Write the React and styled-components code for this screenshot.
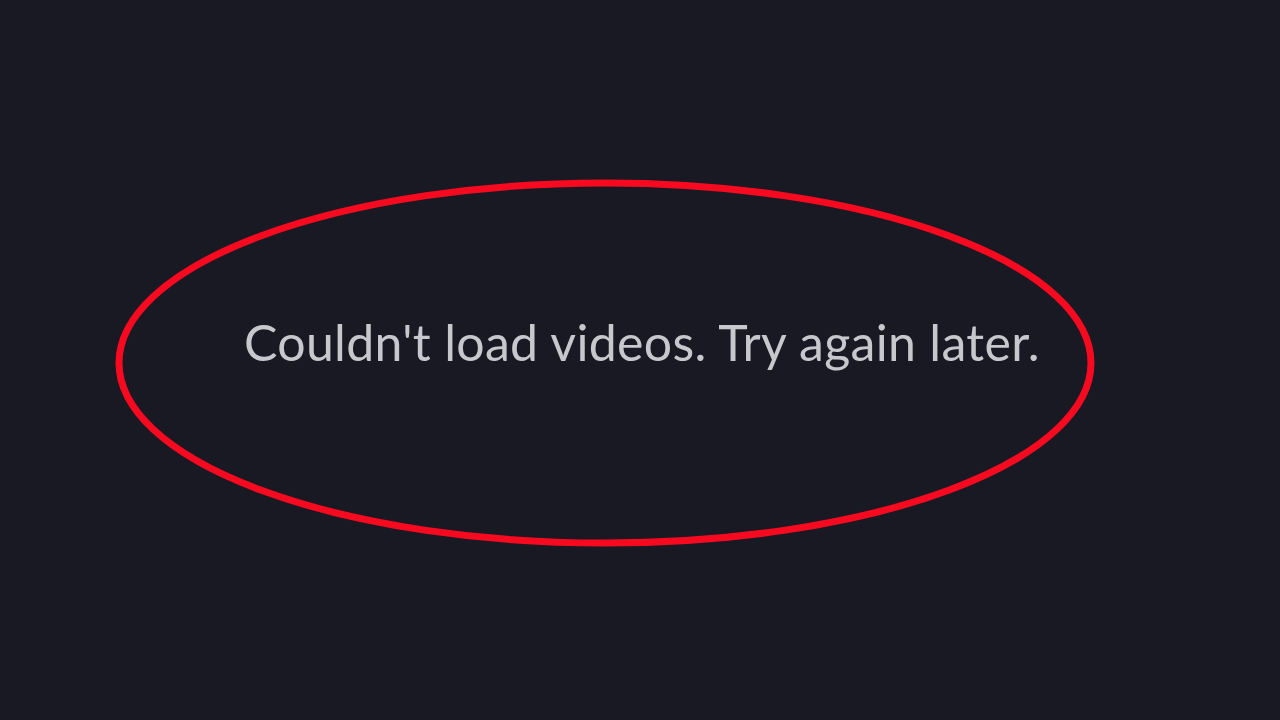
import styled, { createGlobalStyle } from 'styled-components';

const GlobalStyle = createGlobalStyle`
  html, body {
    margin: 0;
    padding: 0;
    background: #181923;
  }
`;

const SScreen = styled.div`
  position: relative;
  width: 1280px;
  height: 720px;
  overflow: hidden;
  background: #181923;
  display: flex;
  align-items: flex-start;
  padding: 312px 0 0 244px;
  box-sizing: border-box;
`;

const SMessage = styled.p`
  margin: 0;
  font-family: Lato, 'Noto Sans', sans-serif;
  font-size: 50px;
  line-height: 60px;
  letter-spacing: 0.32px;
  color: #c7c8cd;
  white-space: nowrap;
`;

const SMark = styled.svg`
  position: absolute;
  inset: 0;
  pointer-events: none;
`;

function App() {
  return (
    <>
      <GlobalStyle />
      <SScreen>
        <SMessage>Couldn't load videos. Try again later.</SMessage>
        <SMark width="1280" height="720" viewBox="0 0 1280 720">
          <ellipse cx="605" cy="363" rx="486" ry="180" fill="none" stroke="#f70a20" strokeWidth="7" />
        </SMark>
      </SScreen>
    </>
  );
}

export default App;
